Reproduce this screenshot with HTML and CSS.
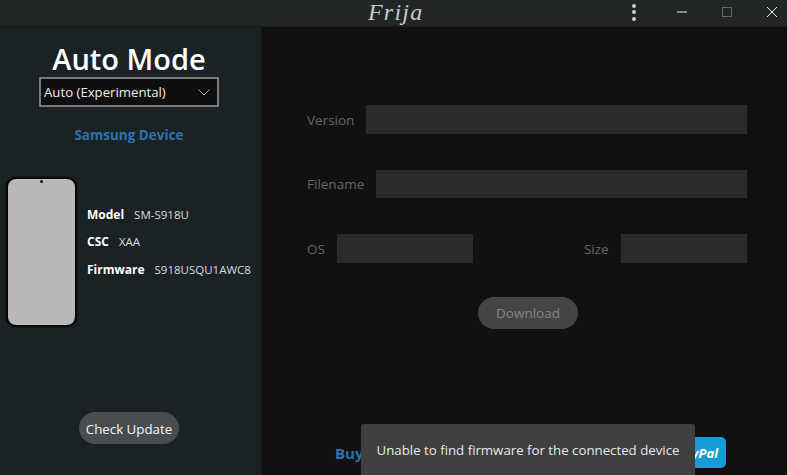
FILE: index.html
```html
<!DOCTYPE html>
<html>
<head>
  <title>Frija</title>
  <link rel="stylesheet" href="styles.css">
</head>
<body>
  <div class="window">
    <div class="titlebar">
      <div class="app-name">Frija</div>
      <div class="dots"><span></span><span></span><span></span></div>
      <div class="win-btn">
        <svg width="12" height="12" viewBox="0 0 12 12"><path d="M1 6h10" stroke="#eee" stroke-width="1"/></svg>
      </div>
      <div class="win-btn">
        <svg width="12" height="12" viewBox="0 0 12 12"><rect x="1.5" y="1.5" width="9" height="9" fill="none" stroke="#666"/></svg>
      </div>
      <div class="win-btn">
        <svg width="12" height="12" viewBox="0 0 12 12"><path d="M1 1l10 10M11 1L1 11" stroke="#eee" stroke-width="1"/></svg>
      </div>
    </div>

    <div class="content">
      <div class="sidebar">
        <h1 class="mode-title">Auto Mode</h1>
        <div class="mode-select">
          <span>Auto (Experimental)</span>
          <svg width="12" height="7" viewBox="0 0 12 7"><path d="M.5 .5L6 6 11.5 .5" fill="none" stroke="#aaa"/></svg>
        </div>
        <div class="device-title">Samsung Device</div>

        <div class="device">
          <div class="phone"><span class="camera"></span></div>
          <div class="device-info">
            <div class="info-row"><b>Model</b><span>SM-S918U</span></div>
            <div class="info-row"><b>CSC</b><span>XAA</span></div>
            <div class="info-row"><b>Firmware</b><span>S918USQU1AWC8</span></div>
          </div>
        </div>

        <div class="check-update">Check Update</div>
      </div>

      <div class="main">
        <div class="field version"><label>Version</label><div class="input"></div></div>
        <div class="field filename"><label>Filename</label><div class="input"></div></div>
        <div class="field split">
          <label>OS</label><div class="input os"></div>
          <label class="size-label">Size</label><div class="input size"></div>
        </div>
        <div class="download">Download</div>
        <div class="footer">
          <span class="buy">Buy</span>
          <span class="paypal">PayPal</span>
        </div>
      </div>
    </div>

    <div class="toast">Unable to find firmware for the connected device</div>
  </div>
</body>
</html>
```

FILE: styles.css
```css
* {
  box-sizing: border-box;
}
body {
  margin: 0;
  background: #111;
  font-family: "Open Sans", "Noto Sans", sans-serif;
  overflow: hidden;
}
.window {
  position: relative;
  width: 787px;
  height: 475px;
  display: flex;
  flex-direction: column;
  overflow: hidden;
}
.titlebar {
  height: 27px;
  flex: none;
  display: flex;
  align-items: center;
  background: #212526;
  border-bottom: 1px solid #1a1a1a;
  padding: 0 0 2px 368px;
}
.app-name {
  width: 56px;
  flex: none;
  font-family: "Liberation Serif", serif;
  font-style: italic;
  font-size: 24px;
  letter-spacing: 1.2px;
  line-height: 25px;
  color: #c9c9c9;
}
.dots {
  margin-left: 208px;
  margin-right: 23px;
  width: 4px;
  flex: none;
  display: flex;
  flex-direction: column;
  gap: 2.5px;
}
.dots span {
  width: 4px;
  height: 4px;
  border-radius: 50%;
  background: #ccc;
}
.win-btn {
  width: 45px;
  flex: none;
  display: flex;
  justify-content: center;
  align-items: center;
}
.content {
  flex: 1;
  display: flex;
  min-height: 0;
}
.sidebar {
  width: 262px;
  flex: none;
  background: #1b2226;
  border-right: 2px solid #171b1d;
  padding-right: 2px;
  display: flex;
  flex-direction: column;
  align-items: center;
}
.mode-title {
  margin: 13px 0 -1px;
  font-size: 29px;
  font-weight: 600;
  line-height: 38px;
  color: #fff;
}
.mode-select {
  width: 180px;
  height: 30px;
  padding: 0 7px 0 3px;
  display: flex;
  align-items: center;
  justify-content: space-between;
  background: #0f0f10;
  border: 2px solid #7a7a7a;
  font-size: 13.2px;
  color: #eee;
}
.device-title {
  margin-top: 19px;
  font-size: 13.5px;
  font-weight: 700;
  line-height: 18px;
  color: #2c72ad;
}
.device {
  align-self: stretch;
  display: flex;
  margin-top: 33px;
  padding-left: 6px;
}
.phone {
  position: relative;
  width: 71px;
  height: 150px;
  flex: none;
  background: #b9b8b8;
  border: 2px solid #050505;
  border-radius: 10px;
  box-shadow: 0 0 2px #050505;
}
.camera {
  position: absolute;
  top: 1px;
  left: 32px;
  width: 3px;
  height: 3px;
  border-radius: 50%;
  background: #111;
}
.device-info {
  margin-left: 10px;
  padding-top: 28px;
  display: flex;
  flex-direction: column;
  gap: 9.5px;
}
.info-row {
  display: flex;
  align-items: center;
  gap: 10px;
  height: 18px;
  font-size: 11.5px;
  color: #ddd;
  white-space: nowrap;
}
.info-row b {
  font-size: 12px;
  color: #fff;
}
.check-update {
  width: 100px;
  height: 32px;
  margin-top: 85px;
  padding-top: 2px;
  display: flex;
  align-items: center;
  justify-content: center;
  background: #4a4d50;
  border-radius: 16px;
  font-size: 13.3px;
  color: #f6f6f6;
}
.main {
  flex: 1;
  padding: 78px 40px 0 45px;
  display: flex;
  flex-direction: column;
  background: #111;
}
.field {
  display: flex;
  align-items: center;
  font-size: 13.5px;
  color: #666;
}
.field label {
  margin-right: 12px;
  white-space: nowrap;
}
.input {
  flex: 1;
  height: 29px;
  background: #2b2b2b;
}
.filename {
  margin-top: 36px;
}
.filename .input {
  height: 28px;
}
.split {
  margin-top: 36px;
}
.input.os {
  flex: none;
  width: 136px;
}
.size-label {
  margin-left: 111px;
}
.input.size {
  flex: none;
  width: 126px;
}
.download {
  align-self: center;
  width: 100px;
  height: 32px;
  margin: 34px 0 0 2px;
  display: flex;
  align-items: center;
  justify-content: center;
  background: #444;
  border-radius: 16px;
  font-size: 13.5px;
  color: #868686;
}
.footer {
  margin-top: 108px;
  display: flex;
  align-items: center;
  justify-content: space-between;
  padding-left: 28px;
  margin-right: 21px;
}
.buy {
  font-size: 15px;
  font-weight: 700;
  color: #2c72ad;
}
.paypal {
  width: 90px;
  height: 31px;
  padding-right: 8px;
  display: flex;
  align-items: center;
  justify-content: flex-end;
  background: #179bd7;
  border-radius: 5px;
  font-size: 13px;
  font-weight: 700;
  font-style: italic;
  color: #fff;
}
.toast {
  position: absolute;
  left: 361px;
  top: 424px;
  width: 334px;
  height: 51px;
  display: flex;
  align-items: center;
  justify-content: center;
  background: #3f3f3f;
  border-radius: 3px 3px 0 0;
  font-size: 13.25px;
  color: #e8e8e8;
  white-space: nowrap;
}
```
